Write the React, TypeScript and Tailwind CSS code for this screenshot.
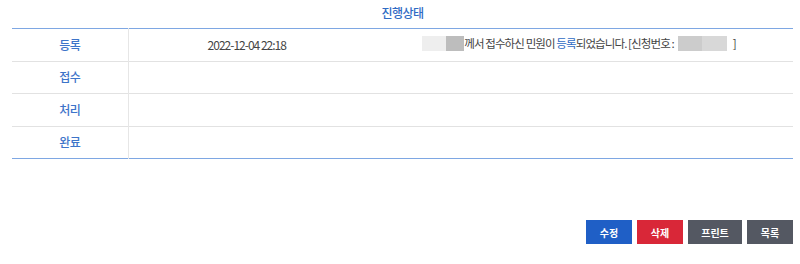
const font = { fontFamily: '"Noto Sans CJK KR", "Noto Sans", sans-serif' };

const steps = [
  { label: "등록", date: "2022-12-04 22:18", done: true },
  { label: "접수" },
  { label: "처리" },
  { label: "완료" },
];

export default function App() {
  return (
    <div className="w-[800px] h-[264px] bg-white text-[12px] text-[#444] tracking-[-1px]" style={font}>
      <div className="pl-3 pr-[7px]">
        <h3 className="h-7 flex items-center justify-center text-[12px] font-medium text-[#2f6bc4] pb-0.5 tracking-[-0.5px]">
          진행상태
        </h3>
        <table className="w-full border-collapse border-t border-b border-[#7ea7e3]">
          <colgroup>
            <col className="w-[116px]" />
            <col className="w-[237px]" />
            <col />
          </colgroup>
          <tbody>
            {steps.map((step, i) => (
              <tr key={step.label} className={i < steps.length - 1 ? "border-b border-[#e2e2e2]" : ""}>
                <th className="h-[32.5px] font-medium text-[#3d74c9] text-center border-r border-[#e6e6e6] tracking-[-0.5px]">
                  {step.label}
                </th>
                <td className="text-center">{step.date}</td>
                <td className="text-center">
                  {step.done && (
                    <span className="inline-flex items-center text-[11.5px] tracking-[-0.9px]">
                      <span className="inline-block w-[24px] h-[15px] bg-[#eeeeee]" />
                      <span className="inline-block w-[18px] h-[15px] bg-[#bdbdbd]" />
                      <span>
                        께서 접수하신 민원이 <span className="text-[#2f6bc4]">등록</span>되었습니다. [신청번호 :
                      </span>
                      <span className="inline-block w-[24px] h-[15px] bg-[#cccccc] ml-1" />
                      <span className="inline-block w-[25px] h-[15px] bg-[#d8d8d8]" />
                      <span className="ml-1.5">]</span>
                    </span>
                  )}
                </td>
              </tr>
            ))}
          </tbody>
        </table>
        <div className="flex justify-end gap-[5px] mt-[61px] tracking-normal">
          <button className="w-[46px] h-6 bg-[#1f5fc6] text-white text-[10px] font-bold">수정</button>
          <button className="w-[46px] h-6 bg-[#d92738] text-white text-[10px] font-bold">삭제</button>
          <button className="w-[54px] h-6 bg-[#545862] text-white text-[10px] font-bold">프린트</button>
          <button className="w-[46px] h-6 bg-[#545862] text-white text-[10px] font-bold">목록</button>
        </div>
      </div>
    </div>
  );
}
